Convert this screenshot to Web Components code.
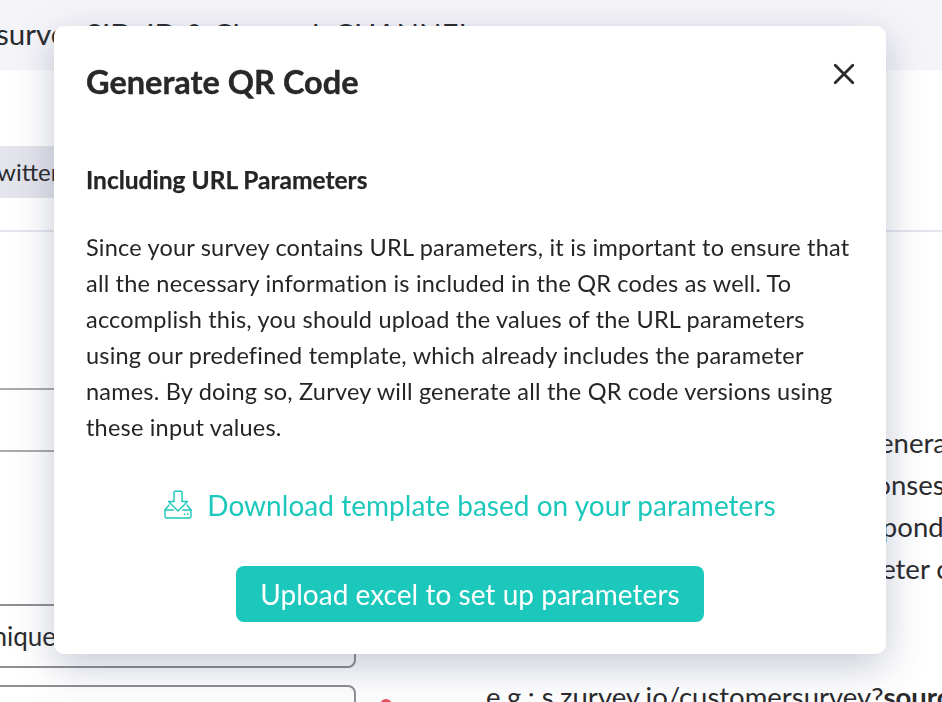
<!DOCTYPE html>
<html>
<head>
<meta charset="utf-8">
<title>Generate QR Code</title>
<style>
  html, body { margin: 0; padding: 0; height: 100%; overflow: hidden; background: #fff; }
  body { font-family: "Lato", "Liberation Sans", sans-serif; color: #2b2b2e; }
</style>
</head>
<body>
<survey-page></survey-page>
<qr-modal heading="Generate QR Code">
  <h3 slot="sub">Including URL Parameters</h3>
  Since your survey contains URL parameters, it is important to ensure that all the necessary information is included in the QR codes as well. To accomplish this, you should upload the values of the URL parameters using our predefined template, which already includes the parameter names. By doing so, Zurvey will generate all the QR code versions using these input values.
</qr-modal>

<script>
class SurveyField extends HTMLElement {
  constructor() {
    super();
    this.attachShadow({ mode: 'open' }).innerHTML = `
      <style>
        :host { display: flex; align-items: center; box-sizing: border-box;
          border: 2px solid #8f8f94; border-radius: 8px; height: 64px; margin-left: -30px; padding: 0 6px;
          font-size: 26px; overflow: hidden; }
      </style>
      <slot></slot>`;
  }
}
customElements.define('survey-field', SurveyField);

class SurveyPage extends HTMLElement {
  constructor() {
    super();
    this.attachShadow({ mode: 'open' }).innerHTML = `
      <style>
        :host { display: block; height: 702px; overflow: hidden; font-size: 27.5px; color: #2b2b2e; }
        .top { display: flex; height: 70px; background: #f5f5f9; overflow: hidden; font-size: 29.5px;
          align-items: flex-start; padding-top: 16px; box-sizing: border-box; line-height: 36px; white-space: nowrap; }
        .top .name { margin-left: -4px; width: 90px; }
        .tabs { height: 162px; box-sizing: border-box; padding-top: 76px; border-bottom: 2px solid #e6e6ee; }
        .chip { display: block; background: #e4e4ec; height: 52px; line-height: 52px; width: 120px;
          font-size: 24px; white-space: nowrap; text-indent: -15px; overflow: hidden; }
        .body { display: grid; grid-template-columns: 356px 1fr; column-gap: 130px; }
        .left { padding-top: 156px; }
        .rule { height: 62px; box-sizing: border-box; border-top: 2px solid #aaaaae; }
        .rule.last { height: 2px; margin-bottom: 152px; }
        survey-field + survey-field { margin-top: 17px; }
        .right { padding-top: 190px; line-height: 42px; white-space: nowrap; }
        .right p { margin: 0; }
        .right .eg { margin-top: 86px; }
        .mark { position: absolute; left: 380px; top: 699px; width: 12px; height: 12px; border-radius: 50%; background: #e8505b; }
      </style>
      <div class="top"><span class="name">survey</span><span>SID, ID &amp; Channel: CHANNEL</span></div>
      <div class="tabs"><span class="chip">Twitter</span></div>
      <div class="body">
        <div class="left">
          <div class="rule"></div>
          <div class="rule last"></div>
          <survey-field>unique</survey-field>
          <survey-field></survey-field>
        </div>
        <div class="right">
          <p style="padding-left:379px">generate</p>
          <p style="padding-left:338px">responses</p>
          <p style="padding-left:360px">respond</p>
          <p style="padding-left:320px">parameter c</p>
          <p class="eg">e.g.: s.zurvey.io/customersurvey?<b>source</b></p>
        </div>
      </div>
      <span class="mark"></span>`;
  }
}
customElements.define('survey-page', SurveyPage);

class DownloadIcon extends HTMLElement {
  constructor() {
    super();
    this.attachShadow({ mode: 'open' }).innerHTML = `
      <style>:host { display: inline-flex; width: 28px; height: 30px; } svg { display: block; }</style>
      <svg width="28" height="30" viewBox="0 0 28 30" fill="none" stroke="currentColor" stroke-width="1.4" stroke-linejoin="round" stroke-linecap="round">
        <path d="M10 2.200a1 1 0 0 1 1-1h6a1 1 0 0 1 1 1V11.500h5.500L14 21 4.500 11.500H10z"/>
        <path d="M5 15 1 20v6.500A1.500 1.500 0 0 0 2.500 28h23a1.500 1.500 0 0 0 1.500-1.500V20l-4-5"/>
        <path d="M1 20h8.500M18.500 20H27"/>
        <circle cx="20.500" cy="24.200" r=".9" fill="currentColor" stroke="none"/>
        <circle cx="23.700" cy="24.200" r=".9" fill="currentColor" stroke="none"/>
      </svg>`;
  }
}
customElements.define('download-icon', DownloadIcon);

class QrModal extends HTMLElement {
  constructor() {
    super();
    this.attachShadow({ mode: 'open' }).innerHTML = `
      <style>
        :host { position: fixed; inset: 0; display: flex; justify-content: center; align-items: flex-start; }
        .box { box-sizing: border-box; width: 832px; height: 628px; margin: 26px 0 0 -2px;
          padding: 36px 32px 0; background: #fff; border-radius: 10px;
          box-shadow: 0 12px 40px rgba(50, 60, 100, .28); display: flex; flex-direction: column; }
        .head { display: flex; justify-content: space-between; height: 42px; }
        h2 { margin: 0; font-size: 32.500px; line-height: 40px; font-weight: 700; color: #28282b;
          -webkit-text-stroke: .4px #28282b; }
        .close { width: 24px; height: 24px; margin-right: -2px; padding: 0; border: 0; background: none; color: #2b2b2e; }
        .close svg { display: block; }
        .txt { margin-top: 61px; font-size: 23.500px; letter-spacing: .2px; line-height: 36px; color: #252528; }
        ::slotted(h3) { margin: 0 0 34px; font-size: 24.500px; letter-spacing: 0; line-height: 30px; font-weight: 700;
          -webkit-text-stroke: .25px #252528; }
        .link { display: flex; justify-content: center; align-items: center; gap: 15px; margin-top: 44px;
          color: #1cc8bb; font-size: 28px; line-height: 32px; letter-spacing: .03px; }
        .btn { align-self: center; margin-top: 45px; width: 468px; height: 56px; border: 0; border-radius: 8px;
          background: #1cc8bb; color: #fff; font: inherit; font-size: 28px; letter-spacing: .03px; }
      </style>
      <div class="box">
        <div class="head"><h2></h2>
          <button class="close" aria-label="Close"><svg width="24" height="24" viewBox="0 0 24 24" fill="none" stroke="currentColor" stroke-width="2.800" stroke-linecap="round"><path d="M3.200 3.200l17.600 17.600M20.800 3.200L3.200 20.800"/></svg></button>
        </div>
        <div class="txt"><slot name="sub"></slot><slot></slot></div>
        <div class="link"><download-icon></download-icon><span>Download template based on your parameters</span></div>
        <button class="btn">Upload excel to set up parameters</button>
      </div>`;
    this.shadowRoot.querySelector('h2').textContent = this.getAttribute('heading');
  }
}
customElements.define('qr-modal', QrModal);
</script>
</body>
</html>
